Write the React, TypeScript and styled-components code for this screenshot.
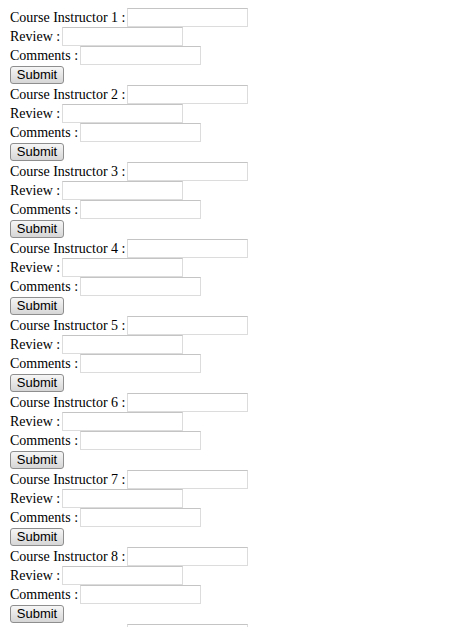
import * as React from 'react';
import styled, { createGlobalStyle } from 'styled-components';

const GlobalStyle = createGlobalStyle`
  html, body {
    background: #ffffff;
  }
  body {
    margin: 8px 8px 8px 10px;
    font-family: "Liberation Serif", "Times New Roman", serif;
    font-size: 14px;
    color: #000000;
  }
`;

const Form = styled.form`
  display: flex;
  flex-direction: column;
`;

const Row = styled.div`
  display: flex;
  align-items: center;
  height: 19px;
`;

const Label = styled.span`
  font-family: "Liberation Serif", "Times New Roman", serif;
  font-size: 14px;
  margin-right: 2px;
`;

const Field = styled.input`
  box-sizing: border-box;
  width: 121px;
  height: 19px;
  margin: 0;
  padding: 1px 2px;
  border: 1px solid #dcdcdc;
  border-top-color: #c4c4c4;
  background: #ffffff;
  font: 13px "Liberation Sans", Arial, sans-serif;
`;

const ButtonRow = styled.div`
  height: 20px;
  display: flex;
  align-items: flex-start;
  padding-top: 1px;
  box-sizing: border-box;
`;

const SubmitButton = styled.button`
  box-sizing: border-box;
  width: 54px;
  height: 18px;
  margin: 0;
  padding: 0;
  border: 1px solid #8e8e8e;
  border-radius: 3px;
  background: linear-gradient(#f6f6f6, #e6e6e6 50%, #d6d6d6);
  font: 13px "Liberation Sans", Arial, sans-serif;
  color: #000000;
  line-height: 16px;
`;

const ReviewBlock: React.FC<{ n: number }> = ({ n }) => (
  <>
    <Row>
      <Label>{`Course Instructor ${n} :`}</Label>
      <Field type="text" />
    </Row>
    <Row>
      <Label>Review :</Label>
      <Field type="text" />
    </Row>
    <Row>
      <Label>Comments :</Label>
      <Field type="text" />
    </Row>
    <ButtonRow>
      <SubmitButton type="button">Submit</SubmitButton>
    </ButtonRow>
  </>
);

const App: React.FC = () => (
  <>
    <GlobalStyle />
    <Form onSubmit={(e) => e.preventDefault()}>
      {[1, 2, 3, 4, 5, 6, 7, 8, 9].map((n) => (
        <ReviewBlock key={n} n={n} />
      ))}
    </Form>
  </>
);

export default App;
